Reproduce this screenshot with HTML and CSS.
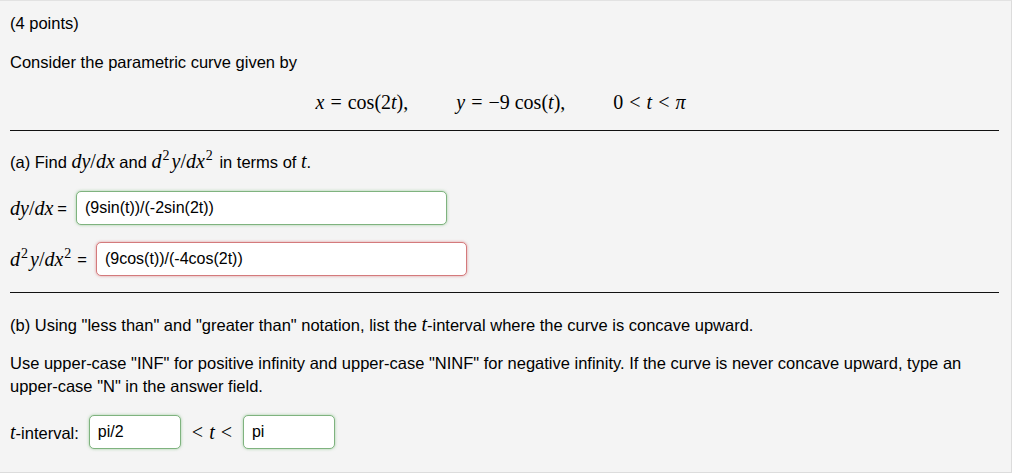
FILE: index.html
```html
<!DOCTYPE html>
<html>
<head>
<meta charset="utf-8">
<link rel="stylesheet" href="styles.css">
</head>
<body>
<div class="panel">
  <p class="pts">(4 points)</p>
  <p class="intro">Consider the parametric curve given by</p>
  <div class="display">
    <span class="eq"><i>x</i><span class="op">=</span>cos(2<i>t</i>),</span>
    <span class="eq"><i>y</i><span class="op">=</span>−9 cos(<i>t</i>),</span>
    <span class="eq">0<span class="op">&lt;</span><i>t</i><span class="op">&lt;</span><i>π</i></span>
  </div>
  <hr class="rule">
  <p class="parta">(a) Find <span class="m"><i>dy</i>/<i>dx</i></span> and <span class="m"><i>d</i><sup>2</sup><i>y</i>/<i>dx</i><sup>2</sup></span> in terms of <span class="m"><i>t</i></span>.</p>
  <div class="row row1">
    <span class="m lbl"><i>dy</i>/<i>dx</i></span><span class="eqs">=</span>
    <div class="field good wide">(9sin(t))/(-2sin(2t))</div>
  </div>
  <div class="row row2">
    <span class="m lbl"><i>d</i><sup>2</sup><i>y</i>/<i>dx</i><sup>2</sup></span><span class="eqs">=</span>
    <div class="field bad wide">(9cos(t))/(-4cos(2t))</div>
  </div>
  <hr class="rule rule2">
  <p class="partb">(b) Using "less than" and "greater than" notation, list the <span class="m"><i>t</i></span>-interval where the curve is concave upward.</p>
  <p class="note">Use upper-case "INF" for positive infinity and upper-case "NINF" for negative infinity. If the curve is never concave upward, type an <span class="nw">upper-case</span> "N" in the answer field.</p>
  <div class="row row3">
    <span class="tlbl"><span class="m"><i>t</i></span>-interval:</span>
    <div class="field good small">pi/2</div>
    <span class="m rel">&lt;<i class="tv">t</i>&lt;</span>
    <div class="field good small">pi</div>
  </div>
</div>
</body>
</html>
```

FILE: styles.css
```css
html, body {
  margin: 0;
  padding: 0;
  background: #ffffff;
}
.panel {
  box-sizing: border-box;
  width: 1012px;
  height: 473px;
  background: #f4f4f4;
  border-top: 1px solid #e2e2e2;
  border-right: 1px solid #dcdcdc;
  border-bottom: 1px solid #dcdcdc;
  padding: 0 12px 0 10px;
  font-family: "Liberation Sans", Arial, sans-serif;
  font-size: 16.5px;
  color: #000;
}
p {
  margin: 0;
  line-height: 20px;
}
.pts {
  padding-top: 12px;
}
.intro {
  margin-top: 19px;
}
.display {
  margin-top: 18px;
  height: 24px;
  line-height: 24px;
  display: flex;
  justify-content: center;
  gap: 48px;
  font-family: "Liberation Serif", "Times New Roman", serif;
  font-size: 20px;
  padding-right: 8px;
}
.display .eq {
  white-space: pre;
}
.op {
  margin: 0 6px;
}
.rule {
  margin: 16px 0 0 0;
  border: 0;
  border-top: 1px solid #111;
  height: 0;
}
.parta {
  margin-top: 18px;
  line-height: 24px;
}
.m {
  font-family: "Liberation Serif", "Times New Roman", serif;
  font-size: 20px;
}
.m sup {
  font-size: 14px;
  line-height: 0;
  vertical-align: 8px;
  margin: 0 2px 0 1px;
}
.row {
  display: flex;
  align-items: center;
  height: 34px;
}
.row1 {
  margin-top: 17px;
}
.row2 {
  margin-top: 17px;
}
.lbl {
  margin-right: 4px;
}
.eqs {
  margin-right: 9px;
}
.field {
  box-sizing: border-box;
  height: 34px;
  background: #fff;
  border-radius: 5px;
  padding: 0 8px;
  display: flex;
  align-items: center;
  font-size: 16px;
}
.field.good {
  border: 1px solid #7fb37f;
  box-shadow: 0 0 3px rgba(90, 170, 90, 0.55);
}
.field.bad {
  border: 1px solid #d47a7c;
  box-shadow: 0 0 3px rgba(210, 90, 95, 0.6);
}
.wide {
  width: 371px;
}
.small {
  width: 92px;
  padding: 0 8px;
}
.rule2 {
  margin-top: 16px;
}
.partb {
  margin-top: 21px;
}
.note {
  margin-top: 17px;
  line-height: 23px;
}
.nw {
  white-space: nowrap;
}
.row3 {
  margin-top: 17px;
}
.tlbl {
  margin-right: 10px;
}
.rel {
  margin: 0 11px 0 11px;
  white-space: pre;
}
.tv {
  margin: 0 6px;
}
```
